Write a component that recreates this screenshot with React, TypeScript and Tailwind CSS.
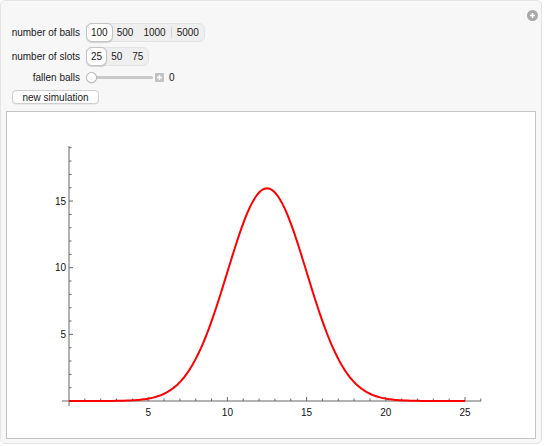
import React from "react";

const X0 = 69;
const Y0 = 400;
const SX = 15.84;
const SY = 13.33;

function px(x: number) {
  return X0 + x * SX;
}
function py(y: number) {
  return Y0 - y * SY;
}

function curvePath() {
  const mu = 12.5;
  const sd = 2.5;
  const pts: string[] = [];
  for (let i = 0; i <= 250; i++) {
    const x = (i / 250) * 25;
    const y = (100 / (sd * Math.sqrt(2 * Math.PI))) * Math.exp(-((x - mu) ** 2) / (2 * sd * sd));
    pts.push(`${i === 0 ? "M" : "L"}${px(x).toFixed(2)},${py(y).toFixed(2)}`);
  }
  return pts.join(" ");
}

const CURVE = curvePath();

function Segmented({ items, selected, sepAfter }: { items: string[]; selected: number; sepAfter?: number }) {
  return (
    <div className="flex h-[19px] items-stretch rounded-[6px] border border-[#e2e2e2] bg-[#efefef]">
      {items.map((it, i) => (
        <React.Fragment key={it}>
          {i === selected ? (
            <div className="-m-px flex items-center justify-center rounded-[6px] border border-[#c4c4c4] bg-white px-[4px] shadow-[0_0.5px_1px_rgba(0,0,0,0.15)]">
              {it}
            </div>
          ) : (
            <div className="flex items-center px-[5px]">{it}</div>
          )}
          {sepAfter === i ? <div className="my-[3px] w-px bg-[#d4d4d4]" /> : null}
        </React.Fragment>
      ))}
    </div>
  );
}

function Plot() {
  const xTicks = Array.from({ length: 26 }, (_, i) => i + 1);
  const yTicks = Array.from({ length: 19 }, (_, i) => i + 1);
  return (
    <svg width="528" height="326" className="block">
      <g transform="translate(-7 -111)" fontFamily="'Liberation Sans', Arial, sans-serif" fontSize="10" fill="#111">
        <line x1="62" y1="400" x2="481" y2="400" stroke="#666" strokeWidth="1" />
        <line x1="69" y1="145" x2="69" y2="405" stroke="#666" strokeWidth="1" />
        {xTicks.map((t) => (
          <line key={"x" + t} x1={px(t)} x2={px(t)} y1={400} y2={t % 5 === 0 ? 396 : 397.5} stroke="#666" strokeWidth="1" />
        ))}
        {yTicks.map((t) => (
          <line key={"y" + t} x1={69} x2={t % 5 === 0 ? 73 : 71.5} y1={py(t)} y2={py(t)} stroke="#666" strokeWidth="1" />
        ))}
        {[5, 10, 15, 20, 25].map((t) => (
          <text key={"xl" + t} x={px(t)} y={415} textAnchor="middle">
            {t}
          </text>
        ))}
        {[5, 10, 15].map((t) => (
          <text key={"yl" + t} x={66} y={py(t) + 3.5} textAnchor="end">
            {t}
          </text>
        ))}
        <path d={CURVE} fill="none" stroke="#ff0000" strokeWidth="2" />
      </g>
    </svg>
  );
}

export default function App() {
  return (
    <div className="h-[446px] w-[544px] bg-white font-['Liberation_Sans',Arial,sans-serif] text-[10px] text-[#1a1a1a]">
      <div className="relative flex h-[444px] w-[542px] flex-col rounded-[5px] border border-[#e4e4e4] bg-[#f7f7f7]">
        <div className="absolute right-[3px] top-[9px] flex h-[11px] w-[11px] items-center justify-center rounded-full bg-[#a9a9a9]">
          <svg width="7" height="7" viewBox="0 0 7 7">
            <path d="M3.5 1v5M1 3.5h5" stroke="#fff" strokeWidth="1.6" />
          </svg>
        </div>

        <div className="flex flex-col pt-[22px]">
          <div className="flex h-[19px] items-center">
            <div className="w-[79px] text-right">number of balls</div>
            <div className="ml-[6px]">
              <Segmented items={["100", "500", "1000", "5000"]} selected={0} sepAfter={2} />
            </div>
          </div>
          <div className="mt-[5px] flex h-[19px] items-center">
            <div className="w-[79px] text-right">number of slots</div>
            <div className="ml-[6px]">
              <Segmented items={["25", "50", "75"]} selected={0} />
            </div>
          </div>
          <div className="mt-[4px] flex h-[14px] items-center">
            <div className="w-[79px] text-right">fallen balls</div>
            <div className="ml-[6px] flex items-center">
              <div className="relative flex h-[12px] w-[68px] items-center">
                <div className="ml-[4px] h-[3px] w-[63px] rounded-full bg-[#c9c9c9]" />
                <div className="absolute left-0 top-[0.5px] h-[11px] w-[11px] rounded-full border border-[#b5b5b5] bg-white shadow-[0_0.5px_1px_rgba(0,0,0,0.15)]" />
              </div>
              <div className="ml-[1px] flex h-[9px] w-[9px] items-center justify-center rounded-[1px] bg-[#c2c2c2]">
                <svg width="7" height="7" viewBox="0 0 7 7">
                  <path d="M3.5 1v5M1 3.5h5" stroke="#fff" strokeWidth="1.4" />
                </svg>
              </div>
              <div className="ml-[5px]">0</div>
            </div>
          </div>
          <div className="mt-[6px] flex pl-[11px]">
            <div className="flex h-[14px] w-[87px] items-center justify-center rounded-[4px] border border-[#cfcfcf] bg-white shadow-[0_0.5px_0.5px_rgba(0,0,0,0.1)]">
              new simulation
            </div>
          </div>
        </div>

        <div className="ml-[5px] mt-[7px] h-[328px] w-[530px] border border-[#c4c4c4] bg-white">
          <Plot />
        </div>
      </div>
    </div>
  );
}
